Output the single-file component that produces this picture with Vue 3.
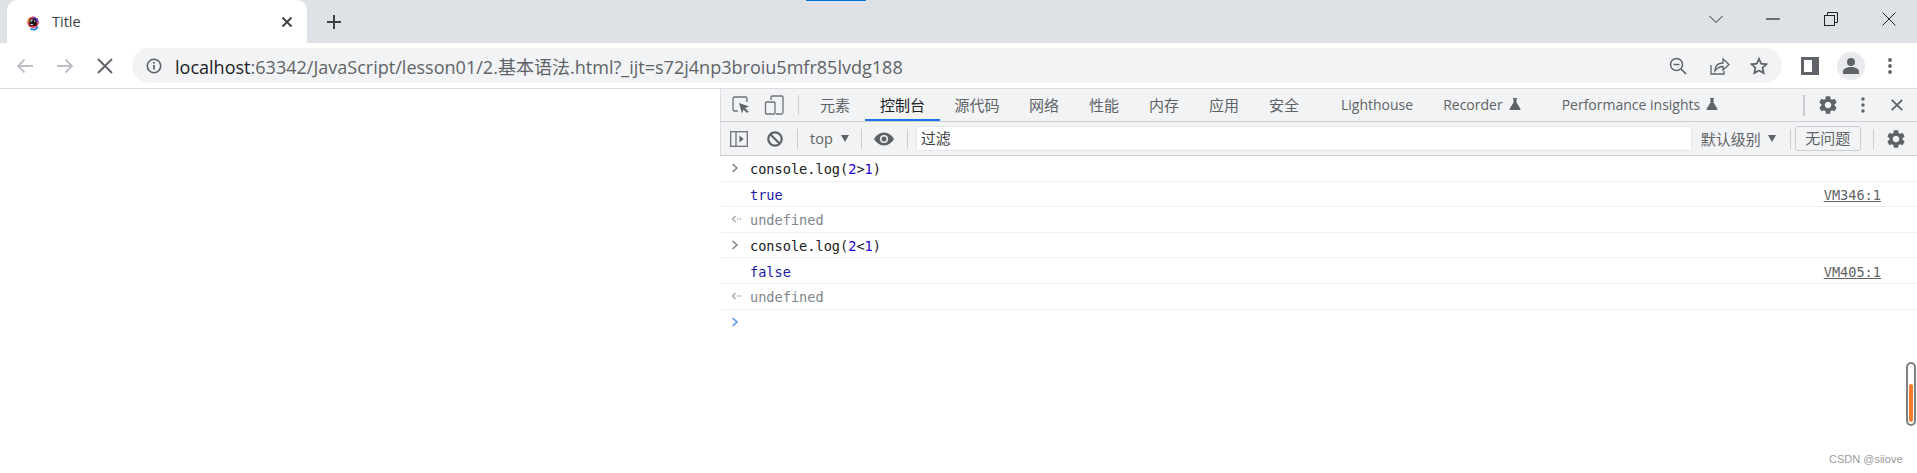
<script setup>
const tabsA = [
  { label: '元素', w: 60 },
  { label: '控制台', w: 75, active: true },
  { label: '源代码', w: 74 },
  { label: '网络', w: 60 },
  { label: '性能', w: 60 },
  { label: '内存', w: 60 },
  { label: '应用', w: 60 },
  { label: '安全', w: 60 }
]
const rows = [
  { kind: 'in', parts: [['console.log(', ''], ['2', 'num'], ['>', ''], ['1', 'num'], [')', '']] },
  { kind: 'out', parts: [['true', 'val']], src: 'VM346:1' },
  { kind: 'ret', parts: [['undefined', 'undef']] },
  { kind: 'in', parts: [['console.log(', ''], ['2', 'num'], ['<', ''], ['1', 'num'], [')', '']] },
  { kind: 'out', parts: [['false', 'val']], src: 'VM405:1' },
  { kind: 'ret', parts: [['undefined', 'undef']] }
]
const gear = 'M19.14 12.94c.04-.3.06-.61.06-.94 0-.32-.02-.64-.07-.94l2.03-1.58c.18-.14.23-.41.12-.61l-1.92-3.32c-.12-.22-.37-.29-.59-.22l-2.39.96c-.5-.38-1.03-.7-1.62-.94l-.36-2.54c-.04-.24-.24-.41-.48-.41h-3.84c-.24 0-.43.17-.47.41l-.36 2.54c-.59.24-1.13.57-1.62.94l-2.39-.96c-.22-.08-.47 0-.59.22L2.74 8.87c-.12.21-.08.47.12.61l2.03 1.58c-.05.3-.09.63-.09.94s.02.64.07.94l-2.03 1.58c-.18.14-.23.41-.12.61l1.92 3.32c.12.22.37.29.59.22l2.39-.96c.5.38 1.03.7 1.62.94l.36 2.54c.05.24.24.41.48.41h3.84c.24 0 .44-.17.47-.41l.36-2.54c.59-.24 1.13-.56 1.62-.94l2.39.96c.22.08.47 0 .59-.22l1.92-3.32c.12-.22.07-.47-.12-.61l-2.01-1.58zM12 15.6c-1.98 0-3.6-1.62-3.6-3.6s1.62-3.6 3.6-3.6 3.6 1.62 3.6 3.6-1.62 3.6-3.6 3.6z'
</script>

<template>
  <div class="page">
    <div class="strip">
      <div class="tab">
        <svg class="favicon" width="14" height="17" viewBox="0 0 16 18">
          <circle cx="8" cy="7.5" r="6.500" fill="#d8324a" />
          <path d="M8 1a6.500 6.500 0 0 1 6.500 6.500L8 7.500z" fill="#7a4be0" />
          <path d="M1.500 7.500A6.500 6.500 0 0 1 5 2l3 5.500z" fill="#f08a24" />
          <rect x="4" y="3.500" width="8" height="8" fill="#111" />
          <rect x="5" y="9.500" width="3" height="1" fill="#fff" />
          <path d="M5 5h3M6 5v2.500M10 5v2.500" stroke="#fff" stroke-width=".8" fill="none" />
          <path d="M6 15.500c3 1 6 0 7-2" stroke="#1f7ae0" stroke-width="2.200" fill="none" stroke-linecap="round" />
        </svg>
        <span class="tab-title">Title</span>
        <svg class="tab-x" width="12" height="12" viewBox="0 0 12 12"><path d="M1.500 1.500l9 9M10.500 1.500l-9 9" stroke="#3c4043" stroke-width="1.800" /></svg>
      </div>
      <svg class="plus" width="16" height="16" viewBox="0 0 16 16"><path d="M8 1v14M1 8h14" stroke="#3c4043" stroke-width="2" /></svg>
      <div class="winctl">
        <svg width="14" height="8" viewBox="0 0 14 8"><path d="M.5 1l6.500 6.500L13.500 1" stroke="#222" fill="none" /></svg>
        <svg class="ctl-min" width="14" height="2" viewBox="0 0 14 2"><path d="M0 1h14" stroke="#222" stroke-width="1.200" /></svg>
        <svg class="ctl-res" width="14" height="14" viewBox="0 0 14 14"><rect x=".5" y="3.500" width="10" height="10" fill="none" stroke="#222" /><path d="M3.500 3.500v-3h10v10h-3" fill="none" stroke="#222" /></svg>
        <svg class="ctl-close" width="14" height="14" viewBox="0 0 14 14"><path d="M.5.500l13 13M13.500.500l-13 13" stroke="#222" /></svg>
      </div>
    </div>

    <div class="toolbar">
      <svg class="nav nav-back" width="18" height="16" viewBox="0 0 18 16"><path d="M17 8H2M8.500 1.500L2 8l6.500 6.500" stroke="#bcbfc3" stroke-width="1.800" fill="none" /></svg>
      <svg class="nav nav-fwd" width="18" height="16" viewBox="0 0 18 16"><path d="M1 8h15M9.500 1.500L16 8l-6.500 6.500" stroke="#bcbfc3" stroke-width="1.800" fill="none" /></svg>
      <svg class="nav nav-stop" width="16" height="16" viewBox="0 0 16 16"><path d="M1 1l14 14M15 1L1 15" stroke="#5f6368" stroke-width="1.800" /></svg>
      <div class="omni">
        <svg class="info" width="16" height="16" viewBox="0 0 16 16"><circle cx="8" cy="8" r="6.700" fill="none" stroke="#5f6368" stroke-width="1.600" /><path d="M8 7v4.500" stroke="#5f6368" stroke-width="1.800" /><circle cx="8" cy="4.800" r="1" fill="#5f6368" /></svg>
        <span class="url"><span class="url-host">localhost</span>:63342/JavaScript/lesson01/2.基本语法.html?_ijt=s72j4np3broiu5mfr85lvdg188</span>
        <span class="omni-space"></span>
        <svg class="om-ic" width="18" height="18" viewBox="0 0 18 18"><circle cx="7.500" cy="7.500" r="6" fill="none" stroke="#5f6368" stroke-width="1.500" /><path d="M4.500 7.500h6M12 12l5 5" stroke="#5f6368" stroke-width="1.700" fill="none" /></svg>
        <svg class="om-ic om-share" width="20" height="18" viewBox="0 0 20 18"><path d="M1 8v9h13v-3" fill="none" stroke="#5f6368" stroke-width="1.300" /><path d="M5 14c0-5 3-8 8-8V2l6 5.500-6 5.500V9.500c-4 0-6 1.500-8 4.500z" fill="none" stroke="#5f6368" stroke-width="1.300" /></svg>
        <svg class="om-ic om-star" width="18" height="18" viewBox="0 0 18 18"><path d="M9 1.800l2.200 4.900 5.300.6-4 3.500 1.200 5.300L9 13.400l-4.700 2.700 1.200-5.300-4-3.500 5.300-.6z" fill="none" stroke="#5f6368" stroke-width="1.700" /></svg>
      </div>
      <svg class="side" width="18" height="18" viewBox="0 0 18 18"><rect width="18" height="18" fill="#5f6368" /><rect x="3" y="3" width="8" height="12" fill="#fff" /></svg>
      <div class="avatar">
        <svg width="18" height="18" viewBox="0 0 18 18"><circle cx="9" cy="5" r="4" fill="#5f6368" /><path d="M1 17v-2.500C1 11.500 5 10 9 10s8 1.500 8 4.500V17z" fill="#5f6368" /></svg>
      </div>
      <svg class="kebab" width="6" height="18" viewBox="0 0 6 18"><circle cx="3" cy="3" r="1.900" fill="#5f6368" /><circle cx="3" cy="9" r="1.900" fill="#5f6368" /><circle cx="3" cy="15" r="1.900" fill="#5f6368" /></svg>
    </div>

    <div class="body">
      <div class="viewport"></div>
      <div class="devtools">
        <div class="dt-tabs">
          <svg class="dt-ic ic-inspect" width="18" height="18" viewBox="0 0 18 18"><path d="M6 15H2.500A1.500 1.500 0 0 1 1 13.500v-11A1.500 1.500 0 0 1 2.500 1h11A1.500 1.500 0 0 1 15 2.500V6" fill="none" stroke="#6e7175" stroke-width="1.300" /><path d="M7 7l10 3.500-4 1.500 3.500 3.500-1.500 1.500-3.500-3.500-1.500 4z" fill="#5f6368" /></svg>
          <svg class="dt-ic ic-device" width="20" height="20" viewBox="0 0 20 20"><path d="M7 5V2.500A1.500 1.500 0 0 1 8.500 1h9A1.500 1.500 0 0 1 19 2.500v15a1.500 1.500 0 0 1-1.500 1.500H12" fill="none" stroke="#6e7175" stroke-width="1.300" /><rect x="1.500" y="7" width="9.500" height="12" rx="1" fill="none" stroke="#6e7175" stroke-width="1.300" /></svg>
          <span class="sep sep-tab"></span>
          <span v-for="t in tabsA" :key="t.label" class="dt-tab" :class="{ active: t.active }" :style="{ width: t.w + 'px' }">{{ t.label }}</span>
          <span class="dt-tab en lh">Lighthouse</span>
          <span class="dt-tab en rec">Recorder
            <svg class="flask" width="12" height="12" viewBox="0 0 12 12"><path d="M4 0h4v1H7.500v3.500L11.500 11a.7.700 0 0 1-.6 1H1.100a.7.700 0 0 1-.6-1l4-6.500V1H4z" fill="#5f6368" /></svg>
          </span>
          <span class="dt-tab en perf">Performance insights
            <svg class="flask" width="12" height="12" viewBox="0 0 12 12"><path d="M4 0h4v1H7.500v3.500L11.500 11a.7.700 0 0 1-.6 1H1.100a.7.700 0 0 1-.6-1l4-6.500V1H4z" fill="#5f6368" /></svg>
          </span>
          <span class="grow"></span>
          <span class="sep sep-end"></span>
          <svg class="gear gear-top" width="22" height="22" viewBox="0 0 24 24"><path :d="gear" fill="#5f6368" fill-rule="evenodd" /></svg>
          <svg class="dt-kebab" width="4" height="16" viewBox="0 0 4 16"><circle cx="2" cy="2" r="1.700" fill="#5f6368" /><circle cx="2" cy="8" r="1.700" fill="#5f6368" /><circle cx="2" cy="14" r="1.700" fill="#5f6368" /></svg>
          <svg class="dt-close" width="12" height="12" viewBox="0 0 12 12"><path d="M.8.800l10.400 10.400M11.200.800L.8 11.200" stroke="#5f6368" stroke-width="1.800" /></svg>
        </div>

        <div class="dt-bar">
          <svg class="bar-side" width="18" height="16" viewBox="0 0 18 16"><rect x=".7" y=".7" width="16.600" height="14.600" fill="none" stroke="#6e7175" stroke-width="1.300" /><path d="M6 1v14" stroke="#6e7175" stroke-width="1.300" /><path d="M9.500 4.500l4 3.500-4 3.500z" fill="#5f6368" /></svg>
          <svg class="bar-block" width="16" height="16" viewBox="0 0 16 16"><circle cx="8" cy="8" r="6.700" fill="none" stroke="#5f6368" stroke-width="2.200" /><path d="M3.500 3.500l9 9" stroke="#5f6368" stroke-width="2.200" /></svg>
          <span class="sep sep-1"></span>
          <span class="ctx">top</span>
          <span class="tri tri-ctx"></span>
          <span class="sep sep-2"></span>
          <svg class="eye" width="20" height="14" viewBox="0 0 20 14"><path d="M10 .500C5.500.500 2 3.500 0 7c2 3.500 5.500 6.500 10 6.500S18 10.500 20 7C18 3.500 14.500.500 10 .500z" fill="#5f6368" /><circle cx="10" cy="7" r="4" fill="#f1f3f4" /><circle cx="10" cy="7" r="2.500" fill="#5f6368" /></svg>
          <span class="sep sep-3"></span>
          <div class="filter">过滤</div>
          <span class="level">默认级别</span>
          <span class="tri tri-level"></span>
          <span class="sep sep-4"></span>
          <span class="issues">无问题</span>
          <span class="sep sep-5"></span>
          <svg class="gear gear-bar" width="22" height="22" viewBox="0 0 24 24"><path :d="gear" fill="#5f6368" fill-rule="evenodd" /></svg>
        </div>

        <div class="console">
          <div v-for="(r, i) in rows" :key="i" class="row">
            <span class="gutter">
              <svg v-if="r.kind === 'in'" width="8" height="10" viewBox="0 0 8 10"><path d="M1.500 1l4.500 4-4.500 4" stroke="#7b7f84" stroke-width="1.500" fill="none" /></svg>
              <svg v-else-if="r.kind === 'ret'" width="11" height="8" viewBox="0 0 11 8"><path d="M4.500 1L1.500 4l3 3" stroke="#a2a5a9" stroke-width="1.300" fill="none" /><path d="M6 4h1M8.500 4h1.500" stroke="#a2a5a9" stroke-width="1.300" /></svg>
            </span>
            <span class="code"><span v-for="(p, j) in r.parts" :key="j" :class="p[1]">{{ p[0] }}</span></span>
            <span v-if="r.src" class="src">{{ r.src }}</span>
          </div>
          <div class="row prompt">
            <span class="gutter"><svg width="8" height="10" viewBox="0 0 8 10"><path d="M1.500 1l4.500 4-4.500 4" stroke="#5d93f0" stroke-width="1.600" fill="none" /></svg></span>
          </div>
        </div>
      </div>
    </div>

    <div class="loadbar"></div>
    <div class="pill"><div class="pill-fill"></div></div>
    <div class="mark">CSDN @siiove</div>
  </div>
</template>

<style scoped>
.page {
  position: relative;
  width: 1917px;
  height: 473px;
  overflow: hidden;
  background: #fff;
  font-family: "Open Sans", "Noto Sans CJK SC", sans-serif;
}
.strip {
  height: 43px;
  background: #dee1e6;
  display: flex;
  align-items: center;
  padding-left: 7px;
}
.tab {
  width: 300px;
  height: 43px;
  background: #fff;
  border-radius: 10px 10px 0 0;
  display: flex;
  align-items: center;
  box-sizing: border-box;
  padding-left: 19px;
}
.favicon { flex: none; margin-top: 4px; }
.tab-title {
  margin-left: 12px;
  font-size: 14.500px;
  color: #3c4043;
  flex: 1;
}
.tab-x { margin-right: 14px; }
.plus { margin-left: 19px; }
.winctl {
  margin-left: auto;
  display: flex;
  align-items: center;
  padding-right: 21px;
  margin-top: -6px;
}
.ctl-min { margin-left: 43px; }
.ctl-res { margin-left: 44px; }
.ctl-close { margin-left: 44px; }
.toolbar {
  height: 45px;
  box-sizing: content-box;
  background: #fff;
  border-bottom: 1px solid #dadce0;
  display: flex;
  align-items: center;
}
.nav-back { margin-left: 16px; }
.nav-fwd { margin-left: 22px; }
.nav-stop { margin-left: 23px; }
.omni {
  margin-left: 19px;
  width: 1650px;
  height: 35px;
  margin-top: 0;
  background: #f1f3f4;
  border-radius: 18px;
  display: flex;
  align-items: center;
  padding-left: 14px;
  box-sizing: border-box;
}
.info { flex: none; }
.url {
  margin-left: 13px;
  font-size: 18.050px;
  color: #5f6368;
  white-space: nowrap;
}
.url-host { color: #202124; }
.omni-space { flex: 1; }
.om-share { margin-left: 23px; }
.om-star { margin-left: 20px; margin-right: 14px; }
.side { margin-left: 19px; }
.avatar {
  margin-left: 18px;
  width: 28px;
  height: 28px;
  border-radius: 50%;
  background: #e8eaed;
  display: flex;
  align-items: center;
  justify-content: center;
}
.kebab { margin-left: 22px; }
.body {
  display: flex;
  height: 384px;
}
.viewport { width: 720px; flex: none; }
.devtools { flex: 1; min-width: 0; }
.dt-tabs {
  height: 32px;
  background: #f1f3f4;
  border-bottom: 1px solid #cbcdd1;
  border-left: 1px solid #dadce0;
  display: flex;
  align-items: center;
  color: #5f6368;
  font-size: 15px;
  box-sizing: content-box;
}
.ic-inspect { margin-left: 11px; }
.ic-device { margin-left: 14px; }
.sep {
  display: inline-block;
  width: 1px;
  height: 20px;
  background: #cbcdd1;
  flex: none;
}
.sep-tab { margin-left: 14px; margin-right: 6px; }
.dt-tab {
  height: 32px;
  padding-bottom: 2px;
  display: flex;
  align-items: center;
  justify-content: center;
  box-sizing: border-box;
  flex: none;
  white-space: nowrap;
}
.dt-tab.active {
  color: #202124;
  border-bottom: 2px solid #1a73e8;
  padding-bottom: 0;
}
.en { padding: 0 15px 2px; gap: 6px; font-size: 14px; }
.lh { margin-left: 12px; }
.perf { margin-left: 11px; }
.grow { flex: 1; }
.sep-end { width: 2px; height: 21px; margin-right: 12px; }
.dt-kebab { margin-left: 22px; }
.dt-close { margin-left: 26px; margin-right: 14px; }
.dt-bar {
  height: 33px;
  background: #f1f3f4;
  border-bottom: 1px solid #cbcdd1;
  border-left: 1px solid #dadce0;
  display: flex;
  align-items: center;
  color: #5f6368;
  font-size: 15px;
}
.bar-side { margin-left: 9px; }
.bar-block { margin-left: 19px; }
.sep-1 { margin-left: 14px; }
.ctx { margin-left: 12px; font-size: 14.500px; }
.tri {
  width: 0;
  height: 0;
  border-left: 4px solid transparent;
  border-right: 4px solid transparent;
  border-top: 7px solid #5f6368;
}
.tri-ctx { margin-left: 8px; }
.sep-2 { margin-left: 12px; }
.eye { margin-left: 12px; }
.sep-3 { margin-left: 13px; }
.filter {
  margin-left: 8px;
  width: 776px;
  height: 25px;
  box-sizing: border-box;
  background: #fff;
  border: 1px solid #e4e6e9;
  padding-left: 4px;
  line-height: 23px;
  color: #3c4043;
}
.level { margin-left: 9px; }
.tri-level { margin-left: 7px; }
.sep-4 { margin-left: 14px; }
.issues {
  margin-left: 4px;
  width: 66px;
  height: 25px;
  box-sizing: border-box;
  border: 1px solid #cbcdd1;
  border-radius: 3px;
  text-align: center;
  line-height: 23px;
}
.sep-5 { margin-left: 12px; }
.gear-bar { margin-left: 11px; }
.console {
  font-family: "DejaVu Sans Mono", monospace;
  font-size: 13.600px;
  border-left: 1px solid #fff;
}
.row {
  height: 25.600px;
  box-sizing: border-box;
  border-bottom: 1px solid #eff0f1;
  display: flex;
  align-items: center;
  color: #202124;
  padding-right: 36px;
}
.prompt { border-bottom: 0; }
.gutter {
  width: 29px;
  flex: none;
  display: flex;
  padding-left: 10px;
  box-sizing: border-box;
  align-items: center;
}
.code { flex: 1; white-space: pre; padding-top: 2px; }
.num { color: #1c00cf; }
.val { color: #1a1aa6; }
.undef { color: #80868b; }
.src { color: #5f6368; text-decoration: underline; padding-top: 2px; }
.loadbar {
  position: absolute;
  left: 806px;
  top: 0;
  width: 60px;
  height: 1px;
  background: #0078d7;
}
.pill {
  position: absolute;
  left: 1906px;
  top: 362px;
  width: 10px;
  height: 64px;
  box-sizing: border-box;
  border: 2.500px solid #808080;
  border-radius: 5px;
  display: flex;
  align-items: flex-end;
  justify-content: center;
  padding-bottom: 2px;
}
.pill-fill {
  width: 4px;
  height: 38px;
  background: #f57c2a;
  border-radius: 2px;
}
.mark {
  position: absolute;
  left: 1829px;
  top: 452px;
  font-family: "Liberation Sans", sans-serif;
  font-size: 11px;
  line-height: 14px;
  color: #9a9a9a;
  white-space: nowrap;
}
</style>
